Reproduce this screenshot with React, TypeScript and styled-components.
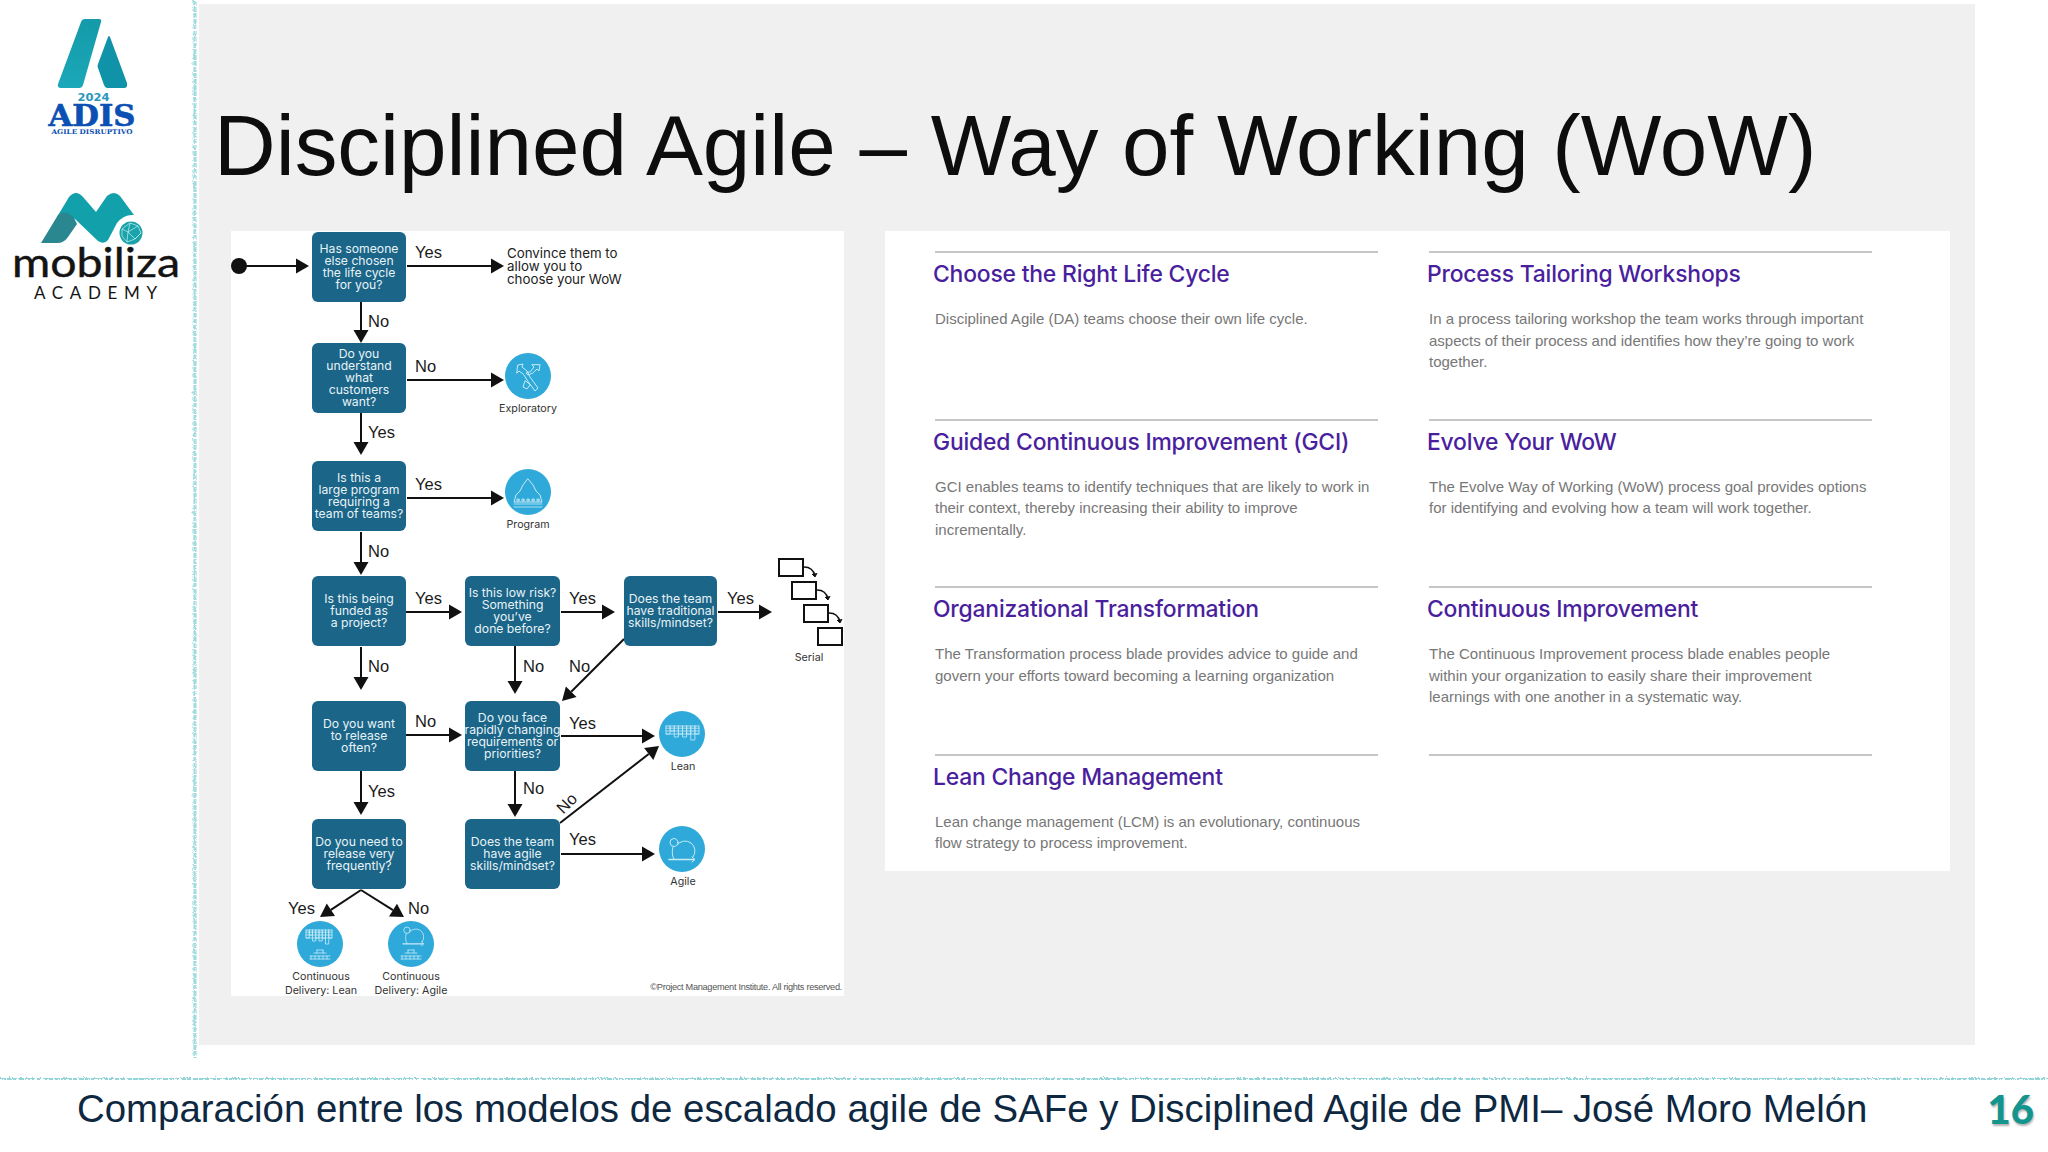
import React from 'react';
import styled, { createGlobalStyle } from 'styled-components';

const GlobalStyle = createGlobalStyle`
  html, body {
    margin: 0;
    padding: 0;
    background: #fff;
    font-family: "Liberation Sans", Arial, sans-serif;
  }
`;

const Slide = styled.div`
  width: 2048px;
  height: 1152px;
  display: flex;
  flex-direction: column;
  overflow: hidden;
  background: #fff;
`;

const Top = styled.div`
  display: flex;
  height: 1075px;
`;

const Sidebar = styled.aside`
  width: 191px;
  flex: none;
  display: flex;
  flex-direction: column;
  gap: 38px;
  padding-top: 12px;
`;

const VRule = styled.svg`
  width: 6px;
  height: 1058px;
  flex: none;
`;

const HRule = styled.svg`
  display: block;
  width: 2048px;
  height: 6px;
  flex: none;
`;

const Panel = styled.main`
  width: 1776px;
  height: 1041px;
  margin: 4px 0 0 2px;
  padding-left: 32px;
  box-sizing: border-box;
  background: #f0f0f0;
`;

const Title = styled.h1`
  margin: 0;
  height: 227px;
  padding-top: 92px;
  box-sizing: border-box;
  margin-left: -17px;
  font-size: 85.4px;
  line-height: 100px;
  font-weight: 400;
  color: #0d0d0d;
  white-space: nowrap;
`;

const Content = styled.div`
  display: flex;
  align-items: flex-start;
  gap: 41px;
`;

const Canvas = styled.div`
  position: relative;
  width: 613px;
  height: 765px;
  flex: none;
  background: #fff;
  overflow: hidden;
  font-family: Inter, sans-serif;
`;

const Wires = styled.svg`
  position: absolute;
  inset: 0;
`;

const Box = styled.div<{ $x: number; $y: number; $w: number }>`
  position: absolute;
  left: ${(p) => p.$x - 231}px;
  top: ${(p) => p.$y - 231}px;
  width: ${(p) => p.$w}px;
  height: 70px;
  display: flex;
  align-items: center;
  justify-content: center;
  border-radius: 6px;
  background: #1b6588;
  color: #e8f3f7;
  font-size: 12.2px;
  line-height: 12px;
  text-align: center;
  white-space: pre;
`;

const Answer = styled.span<{ $x: number; $y: number; $angle?: number }>`
  position: absolute;
  left: ${(p) => p.$x - 231}px;
  top: ${(p) => p.$y - 231}px;
  transform: translateY(-50%) rotate(${(p) => p.$angle ?? 0}deg);
  font-family: "Liberation Sans", Arial, sans-serif;
  font-size: 16.5px;
  line-height: 18px;
  color: #1a1a1a;
`;

const Caption = styled.span<{ $x: number; $y: number }>`
  position: absolute;
  left: ${(p) => p.$x - 231}px;
  top: ${(p) => p.$y - 231}px;
  transform: translate(-50%, -50%);
  font-size: 10.7px;
  line-height: 13.5px;
  color: #333;
  text-align: center;
  white-space: pre;
`;

const Convince = styled.span`
  position: absolute;
  left: 276px;
  top: 16px;
  font-size: 13.3px;
  line-height: 13px;
  color: #222;
  white-space: pre;
`;

const Copyright = styled.span`
  position: absolute;
  right: 2px;
  top: 750px;
  font-family: "Liberation Sans", Arial, sans-serif;
  font-size: 9.2px;
  line-height: 12px;
  letter-spacing: -0.3px;
  color: #555;
  white-space: nowrap;
`;

const Badge = styled.svg<{ $x: number; $y: number }>`
  position: absolute;
  left: ${(p) => p.$x - 231 - 23}px;
  top: ${(p) => p.$y - 231 - 23}px;
  width: 46px;
  height: 46px;
`;

const Blades = styled.section`
  width: 1065px;
  height: 640px;
  flex: none;
  box-sizing: border-box;
  padding: 20px 0 0 50px;
  background: #fff;
  display: grid;
  grid-template-columns: 443px 443px;
  column-gap: 51px;
  grid-auto-rows: 167.5px;
`;

const Blade = styled.article`
  border-top: 2px solid #c6c6c6;
  box-sizing: border-box;
`;

const BladeTitle = styled.h3`
  margin: 9px 0 0 -2px;
  height: 24px;
  font-family: Inter, sans-serif;
  font-size: 22.9px;
  line-height: 24px;
  font-weight: 500;
  letter-spacing: -0.2px;
  color: #4a1f9e;
  white-space: nowrap;
`;

const BladeText = styled.p`
  margin: 22px 0 0;
  font-size: 15px;
  line-height: 21.5px;
  color: #777;
  white-space: pre-line;
`;

const Footer = styled.footer`
  display: flex;
  justify-content: space-between;
  align-items: center;
  padding: 4px 14px 0 77px;
`;

const FooterText = styled.span`
  font-size: 38.4px;
  line-height: 48px;
  color: #0e2841;
  white-space: nowrap;
`;

const PageNumber = styled.span`
  font-family: Lato, sans-serif;
  font-weight: 900;
  font-size: 40px;
  line-height: 48px;
  color: #12958f;
  text-shadow: 1px 2px 2px rgba(0, 0, 0, 0.3);
`;

const boxes = [
  { x: 312, y: 232, w: 94, text: 'Has someone\nelse chosen\nthe life cycle\nfor you?' },
  { x: 312, y: 343, w: 94, text: 'Do you\nunderstand\nwhat\ncustomers\nwant?' },
  { x: 312, y: 461, w: 94, text: 'Is this a\nlarge program\nrequiring a\nteam of teams?' },
  { x: 312, y: 576, w: 94, text: 'Is this being\nfunded as\na project?' },
  { x: 465, y: 576, w: 95, text: 'Is this low risk?\nSomething\nyou’ve\ndone before?' },
  { x: 624, y: 576, w: 93, text: 'Does the team\nhave traditional\nskills/mindset?' },
  { x: 312, y: 701, w: 94, text: 'Do you want\nto release\noften?' },
  { x: 465, y: 701, w: 95, text: 'Do you face\nrapidly changing\nrequirements or\npriorities?' },
  { x: 312, y: 819, w: 94, text: 'Do you need to\nrelease very\nfrequently?' },
  { x: 465, y: 819, w: 95, text: 'Does the team\nhave agile\nskills/mindset?' },
];

const arrows = [
  [239, 266, 309, 266],
  [407, 266, 504, 266],
  [361, 301, 361, 343],
  [407, 380, 504, 380],
  [361, 413, 361, 455],
  [407, 498, 504, 498],
  [361, 532, 361, 575],
  [406, 612, 462, 612],
  [561, 612, 615, 612],
  [718, 612, 772, 612],
  [361, 647, 361, 690],
  [515, 646, 515, 694],
  [624, 639, 562, 701],
  [406, 735, 462, 735],
  [561, 736, 655, 736],
  [361, 770, 361, 815],
  [515, 770, 515, 817],
  [560, 823, 659, 746],
  [561, 854, 655, 854],
  [361, 890, 320, 917],
  [361, 890, 404, 917],
];

const answers = [
  { x: 415, y: 252, t: 'Yes' },
  { x: 368, y: 321, t: 'No' },
  { x: 415, y: 366, t: 'No' },
  { x: 368, y: 432, t: 'Yes' },
  { x: 415, y: 484, t: 'Yes' },
  { x: 368, y: 551, t: 'No' },
  { x: 415, y: 598, t: 'Yes' },
  { x: 569, y: 598, t: 'Yes' },
  { x: 727, y: 598, t: 'Yes' },
  { x: 368, y: 666, t: 'No' },
  { x: 523, y: 666, t: 'No' },
  { x: 569, y: 666, t: 'No' },
  { x: 415, y: 721, t: 'No' },
  { x: 569, y: 723, t: 'Yes' },
  { x: 368, y: 791, t: 'Yes' },
  { x: 523, y: 788, t: 'No' },
  { x: 569, y: 839, t: 'Yes' },
  { x: 288, y: 908, t: 'Yes' },
  { x: 408, y: 908, t: 'No' },
  { x: 556, y: 803, t: 'No', angle: -45 },
];

const captions = [
  { x: 528, y: 409, t: 'Exploratory' },
  { x: 528, y: 525, t: 'Program' },
  { x: 809, y: 658, t: 'Serial' },
  { x: 683, y: 767, t: 'Lean' },
  { x: 683, y: 882, t: 'Agile' },
  { x: 321, y: 983, t: 'Continuous\nDelivery: Lean' },
  { x: 411, y: 983, t: 'Continuous\nDelivery: Agile' },
];

const blades = [
  { title: 'Choose the Right Life Cycle', text: 'Disciplined Agile (DA) teams choose their own life cycle.' },
  { title: 'Process Tailoring Workshops', text: 'In a process tailoring workshop the team works through important\naspects of their process and identifies how they’re going to work\ntogether.' },
  { title: 'Guided Continuous Improvement (GCI)', text: 'GCI enables teams to identify techniques that are likely to work in\ntheir context, thereby increasing their ability to improve\nincrementally.' },
  { title: 'Evolve Your WoW', text: 'The Evolve Way of Working (WoW) process goal provides options\nfor identifying and evolving how a team will work together.' },
  { title: 'Organizational Transformation', text: 'The Transformation process blade provides advice to guide and\ngovern your efforts toward becoming a learning organization' },
  { title: 'Continuous Improvement', text: 'The Continuous Improvement process blade enables people\nwithin your organization to easily share their improvement\nlearnings with one another in a systematic way.' },
  { title: 'Lean Change Management', text: 'Lean change management (LCM) is an evolutionary, continuous\nflow strategy to process improvement.' },
  { title: '', text: '' },
];

// one straight connector with its filled head, in page coordinates
const Arrow = ({ from }: { from: number[] }) => {
  const [x1, y1, x2, y2] = from;
  const len = Math.hypot(x2 - x1, y2 - y1);
  const ux = (x2 - x1) / len;
  const uy = (y2 - y1) / len;
  const bx = x2 - ux * 13;
  const by = y2 - uy * 13;
  const head = `${x2},${y2} ${bx - uy * 7.5},${by + ux * 7.5} ${bx + uy * 7.5},${by - ux * 7.5}`;
  return (
    <g>
      <line x1={x1} y1={y1} x2={bx} y2={by} stroke="#111" strokeWidth="2" />
      <polygon points={head} fill="#111" />
    </g>
  );
};

const ink = { fill: 'none', stroke: '#c9ebf8', strokeWidth: 1, strokeLinecap: 'round', strokeLinejoin: 'round' } as const;

const Board = ({ x, y, w }: { x: number; y: number; w: number }) => {
  const cell = w / 8;
  const tails = [2, 1, 3, 2, 3, 2, 4, 2];
  return (
    <g {...ink} strokeWidth={0.8}>
      <path d={`M${x} ${y}h${w}M${x} ${y + 2.2}h${w}M${x} ${y + 5}h${w}M${x} ${y + 8}h${w}`} />
      {tails.map((t, i) => (
        <path key={i} d={`M${x + i * cell} ${y}v${t * 3 + 2}h${cell}v-${t * 3 + 2}`} />
      ))}
    </g>
  );
};

const Loop = () => (
  <g {...ink}>
    <circle cx="15" cy="16.5" r="4" />
    <path d="M18 19a10 10 0 0 1 16 12" />
    <path d="M14 21q-2 8 1 12" />
    <path d="M10 33.5h25" strokeWidth="1.6" />
    <path d="M33 31l3 2.5-3 2.5" />
  </g>
);

const Crowd = () => (
  <g {...ink} strokeWidth={0.8}>
    <path d="M17 32h12M13 35h20M13 38h20" />
    {[14, 18, 22, 26, 30].map((x) => (
      <path key={x} d={`M${x} 35v3`} />
    ))}
    <path d="M20 29h6M20 32v-3M26 32v-3" />
  </g>
);

const BadgeIcon = ({ kind, x, y }: { kind: string; x: number; y: number }) => (
  <Badge $x={x} $y={y} viewBox="0 0 46 46">
    <circle cx="23" cy="23" r="23" fill="#2ea9d9" />
    {kind === 'exploratory' && (
      <g {...ink}>
        <path d="M13 12l5-1-1 3q6 3 8 10l8 11-3 3-8-11q-3-7-8-9l-2 2z" />
        <path d="M35 12l-1 6-2-2q-4 5-9 6l-2-2q5 0 8-6l-2-2z" />
        <path d="M20 28l-2 6 4 2 3-4z" />
      </g>
    )}
    {kind === 'program' && (
      <g {...ink}>
        <path d="M23 10l5 6 3 6 4 4 2 7H9l2-7 4-4 3-6z" />
        <path d="M9 35h28M9 38h28" strokeWidth=".8" />
        {[13, 18, 23, 28, 33].map((cx) => (
          <circle key={cx} cx={cx} cy="31" r="1.2" />
        ))}
      </g>
    )}
    {kind === 'lean' && <Board x={7} y={15} w={33} />}
    {kind === 'agile' && <Loop />}
    {kind === 'cdLean' && (
      <>
        <Board x={9} y={9} w={26} />
        <Crowd />
      </>
    )}
    {kind === 'cdAgile' && (
      <>
        <g transform="translate(7 -4) scale(.8)">
          <Loop />
        </g>
        <Crowd />
      </>
    )}
  </Badge>
);

const SerialSteps = () => (
  <g fill="none" stroke="#111">
    <rect x="779" y="559" width="24" height="17" strokeWidth="2" />
    <rect x="792" y="582" width="24" height="17" strokeWidth="2" />
    <rect x="804" y="605" width="24" height="17" strokeWidth="2" />
    <rect x="818" y="628" width="24" height="17" strokeWidth="2" />
    <path d="M804 567q9 0 11 9M817 590q9 0 11 9M829 613q9 0 11 9" strokeWidth="1.5" />
    <path d="M812 574l3 3 2-4M825 597l3 3 2-4M837 620l3 3 2-4" fill="#111" strokeWidth="1" />
  </g>
);

const AdisLogo = () => (
  <svg width="191" height="130" viewBox="0 12 191 130">
    <defs>
      <linearGradient id="bladeA" x1="0" y1="0" x2="0" y2="1">
        <stop offset="0" stopColor="#149aa9" />
        <stop offset="1" stopColor="#1ba8b8" />
      </linearGradient>
    </defs>
    <path d="M85 19h14q3 0 2 3L83 85q-1 3-4 3H61q-4 0-3-4L81 22q1-3 4-3z" fill="url(#bladeA)" />
    <path d="M108 37q1-2 2 0l17 46q1 5-3 5h-17q-2 0-3-3l-6-17q-1-2 0-4z" fill="#1092a8" />
    <text x="93.5" y="101" textAnchor="middle" fontFamily="'DejaVu Sans'" fontWeight="700" fontSize="10" textLength="32" lengthAdjust="spacingAndGlyphs" fill="#2b97bd">2024</text>
    <text x="92" y="126" textAnchor="middle" fontFamily="'DejaVu Serif'" fontWeight="700" fontSize="30" textLength="87" lengthAdjust="spacingAndGlyphs" fill="#0b50b2" stroke="#0b50b2" strokeWidth=".6">ADIS</text>
    <text x="92" y="134" textAnchor="middle" fontFamily="'DejaVu Serif'" fontWeight="700" fontSize="6.6" textLength="81" lengthAdjust="spacingAndGlyphs" fill="#0b50b2">AGILE DISRUPTIVO</text>
  </svg>
);

const MobilizaLogo = () => (
  <svg width="191" height="130" viewBox="0 180 191 130">
    <path d="M57 217l12-20q7-8 14 0l13 15 11-16q7-6 13 0l14 19q-10-1-17 8l-9 17q-4 5-10 1l-23-22q-8-6-18-2z" fill="#12a0ab" />
    <path d="M41 243l17-28q8-6 16 3l3 6-9 13q-4 6-11 6z" fill="#2a878f" />
    <circle cx="131" cy="233" r="11.5" fill="#1aa3aa" />
    <path d="M122 229l8-6 8 3 3 7-6 6-8 3-5-6zM130 223l-2 9 7 7M128 232l-6-3M128 232l-1 10M128 232l10-6M135 239l6-6" fill="none" stroke="#c8f0f0" strokeWidth=".7" />
    <text x="96" y="277" textAnchor="middle" fontFamily="Lato" fontSize="40" textLength="168" lengthAdjust="spacingAndGlyphs" fill="#141414" stroke="#141414" strokeWidth=".4">mobiliza</text>
    <text x="95.5" y="299" textAnchor="middle" fontFamily="Lato" fontSize="17" textLength="123" fill="#141414">ACADEMY</text>
  </svg>
);

const App = () => (
  <Slide>
    <GlobalStyle />
    <Top>
      <Sidebar>
        <AdisLogo />
        <MobilizaLogo />
      </Sidebar>
      <VRule viewBox="0 0 6 1058">
        <defs>
          <filter id="roughV" filterUnits="userSpaceOnUse" x="0" y="0" width="6" height="1058">
            <feTurbulence baseFrequency="0.35" numOctaves="2" seed="4" />
            <feDisplacementMap in="SourceGraphic" scale="3" />
          </filter>
        </defs>
        <line x1="3" y1="0" x2="3" y2="1058" stroke="#a2dcdf" strokeWidth="3.2" strokeDasharray="5 1" filter="url(#roughV)" />
      </VRule>
      <Panel>
        <Title>Disciplined Agile – Way of Working (WoW)</Title>
        <Content>
          <Canvas>
            <Wires viewBox="231 231 613 765" width="613" height="765">
              <circle cx="239" cy="266" r="8" fill="#111" />
              {arrows.map((a) => (
                <Arrow key={a.join()} from={a} />
              ))}
              <SerialSteps />
            </Wires>
            {boxes.map((b) => (
              <Box key={b.text} $x={b.x} $y={b.y} $w={b.w}>
                {b.text}
              </Box>
            ))}
            {answers.map((a) => (
              <Answer key={`${a.x}-${a.y}`} $x={a.x} $y={a.y} $angle={a.angle}>
                {a.t}
              </Answer>
            ))}
            <Convince>{'Convince them to\nallow you to\nchoose your WoW'}</Convince>
            <BadgeIcon kind="exploratory" x={528} y={376} />
            <BadgeIcon kind="program" x={528} y={492} />
            <BadgeIcon kind="lean" x={682} y={734} />
            <BadgeIcon kind="agile" x={682} y={849} />
            <BadgeIcon kind="cdLean" x={320} y={944} />
            <BadgeIcon kind="cdAgile" x={411} y={944} />
            {captions.map((c) => (
              <Caption key={c.t} $x={c.x} $y={c.y}>
                {c.t}
              </Caption>
            ))}
            <Copyright>©Project Management Institute. All rights reserved.</Copyright>
          </Canvas>
          <Blades>
            {blades.map((b, i) => (
              <Blade key={i}>
                <BladeTitle>{b.title}</BladeTitle>
                <BladeText>{b.text}</BladeText>
              </Blade>
            ))}
          </Blades>
        </Content>
      </Panel>
    </Top>
    <HRule viewBox="0 0 2048 6">
      <defs>
        <filter id="roughH" filterUnits="userSpaceOnUse" x="0" y="0" width="2048" height="6">
          <feTurbulence baseFrequency="0.35" numOctaves="2" seed="9" />
          <feDisplacementMap in="SourceGraphic" scale="3" />
        </filter>
      </defs>
      <line x1="0" y1="3" x2="2048" y2="3" stroke="#93d5d8" strokeWidth="2.2" strokeDasharray="5 1" filter="url(#roughH)" />
    </HRule>
    <Footer>
      <FooterText>Comparación entre los modelos de escalado agile de SAFe y Disciplined Agile de PMI– José Moro Melón</FooterText>
      <PageNumber>16</PageNumber>
    </Footer>
  </Slide>
);

export default App;
